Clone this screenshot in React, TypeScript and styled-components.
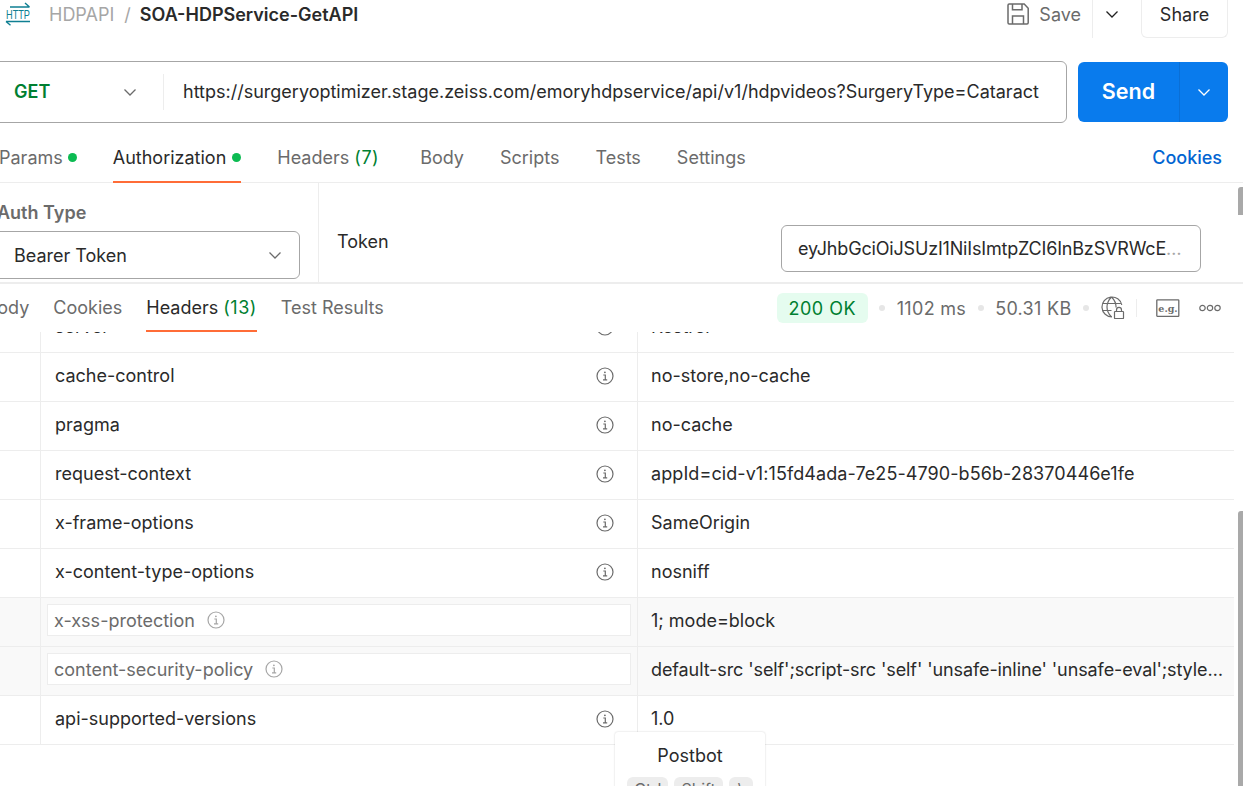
import styled, { createGlobalStyle } from 'styled-components';

const GlobalStyle = createGlobalStyle`
	html, body {
		margin: 0;
		padding: 0;
		background: #fff;
		overflow: hidden;
	}
	* {
		box-sizing: border-box;
	}
`;

const color = {
	text: '#2a2a2a',
	muted: '#6b6b6b',
	faint: '#a6a6a6',
	line: '#ededed',
	field: '#a6a6a6',
	green: '#007f31',
	dot: '#0cbb52',
	orange: '#ff6c37',
	blue: '#097bed',
	link: '#0265d2',
};

const Chevron = ({ size = 16, stroke = '#6b6b6b' }: { size?: number; stroke?: string }) => (
	<svg width={size} height={size} viewBox='0 0 16 16' fill='none'>
		<path d='M2.5 5.5 8 11l5.5-5.5' stroke={stroke} strokeWidth='1.3' />
	</svg>
);

const InfoIcon = ({ faded }: { faded?: boolean }) => (
	<svg width='18' height='18' viewBox='0 0 18 18' fill='none' stroke={faded ? '#a6a6a6' : '#6b6b6b'}>
		<circle cx='9' cy='9' r='8' strokeWidth='1.2' />
		<path d='M7.3 8h2v4.6M7 12.8h4.2' strokeWidth='1.2' />
		<circle cx='8.9' cy='5.3' r='.9' fill={faded ? '#a6a6a6' : '#6b6b6b'} stroke='none' />
	</svg>
);

const HttpIcon = () => (
	<svg width='26' height='28' viewBox='0 0 26 28' fill='none' stroke='#0f7f92'>
		<path d='M5 7h19.500M20 3l4.500 4' strokeWidth='1.4' />
		<path d='M1 21.500h24M1 21.500l4.500 3.800' strokeWidth='1.4' />
		<text x='13' y='19' textAnchor='middle' fontFamily='Liberation Sans, sans-serif' fontSize='13' fill='#0f7f92' stroke='none' textLength='24' lengthAdjust='spacingAndGlyphs'>
			HTTP
		</text>
	</svg>
);

const SaveIcon = () => (
	<SaveGlyph width='24' height='24' viewBox='0 0 24 24' fill='none' stroke='#6b6b6b' strokeWidth='1.5'>
		<path d='M2 3.200c0-.7.5-1.200 1.200-1.200h15l4 4.200v14.600c0 .7-.5 1.200-1.200 1.200H3.200c-.7 0-1.200-.5-1.200-1.200z' />
		<path d='M6.500 2v5.700h9.500V2M6.500 22v-8h11v8' />
	</SaveGlyph>
);

const GlobeLockIcon = () => (
	<GlobeGlyph width='26' height='24' viewBox='0 0 26 24' fill='none' stroke='#6b6b6b' strokeWidth='1.2'>
		<path d='M13 21a10 10 0 1 1 9.800-12M3.600 7.500h18M3 14.500h9.500M12.500 1c-6 6-6 14 0 20M12.500 1c3.300 3.200 4.600 7 4.600 10.500' />
		<rect x='15.500' y='15.500' width='9' height='7' rx='.6' fill='#fff' />
		<path d='M17.500 15.500v-1.600a2.500 2.500 0 0 1 5 0v1.600' />
	</GlobeGlyph>
);

const ExampleIcon = () => (
	<ExampleGlyph width='24' height='18' viewBox='0 0 24 18' fill='none'>
		<rect x='.8' y='.8' width='22' height='16.500' rx='.6' stroke='#6b6b6b' strokeWidth='1.3' />
		<text x='12' y='12.500' textAnchor='middle' fontFamily='DejaVu Serif, serif' fontSize='9.500' fontWeight='700' fill='#6b6b6b'>
			e.g.
		</text>
	</ExampleGlyph>
);

const MoreIcon = () => (
	<svg width='22' height='8' viewBox='0 0 22 8' fill='none' stroke='#6b6b6b' strokeWidth='1.2'>
		<circle cx='3.500' cy='4' r='2.700' />
		<circle cx='11' cy='4' r='2.700' />
		<circle cx='18.500' cy='4' r='2.700' />
	</svg>
);

type HeaderRow = { name: string; value: string; hidden?: boolean; spacing?: number };

const rows: HeaderRow[] = [
	{ name: 'server', value: 'Kestrel' },
	{ name: 'cache-control', value: 'no-store,no-cache' },
	{ name: 'pragma', value: 'no-cache' },
	{ name: 'request-context', value: 'appId=cid-v1:15fd4ada-7e25-4790-b56b-28370446e1fe', spacing: 0.08 },
	{ name: 'x-frame-options', value: 'SameOrigin' },
	{ name: 'x-content-type-options', value: 'nosniff' },
	{ name: 'x-xss-protection', value: '1; mode=block', hidden: true },
	{
		name: 'content-security-policy',
		value: "default-src 'self';script-src 'self' 'unsafe-inline' 'unsafe-eval';style-src 'self' 'unsafe-inline';img-src 'self' data:",
		hidden: true,
		spacing: -0.1,
	},
	{ name: 'api-supported-versions', value: '1.0' },
];

const App = () => {
	return (
		<Page>
			<GlobalStyle />
			<TopBar>
				<Crumbs>
					<HttpIcon />
					<Collection>HDPAPI</Collection>
					<Slash>/</Slash>
					<RequestName>SOA-HDPService-GetAPI</RequestName>
				</Crumbs>
				<TopActions>
					<SaveIcon />
					<SaveLabel>Save</SaveLabel>
					<SaveMenu>
						<Chevron stroke='#212121' />
					</SaveMenu>
					<ShareButton>Share</ShareButton>
				</TopActions>
			</TopBar>

			<RequestBar>
				<UrlBox>
					<Method>
						GET
						<Chevron />
					</Method>
					<UrlText>https://surgeryoptimizer.stage.zeiss.com/emoryhdpservice/api/v1/hdpvideos?SurgeryType=Cataract</UrlText>
				</UrlBox>
				<SendGroup>
					<SendLabel>Send</SendLabel>
					<SendMenu>
						<Chevron stroke='#fff' />
					</SendMenu>
				</SendGroup>
			</RequestBar>

			<RequestTabs>
				<Tab>
					Params
					<Dot />
				</Tab>
				<Tab $active>
					Authorization
					<Dot />
				</Tab>
				<Tab $wide>
					<span>
						Headers <Count>(7)</Count>
					</span>
				</Tab>
				<Tab>Body</Tab>
				<Tab>Scripts</Tab>
				<Tab>Tests</Tab>
				<Tab>Settings</Tab>
				<CookiesLink>Cookies</CookiesLink>
			</RequestTabs>

			<AuthPanel>
				<AuthType>
					<AuthLabel>Auth Type</AuthLabel>
					<AuthSelect>
						Bearer Token
						<Chevron />
					</AuthSelect>
				</AuthType>
				<TokenPane>
					<TokenLabel>Token</TokenLabel>
					<TokenField>
						<TokenValue>
							<span>eyJhbGciOiJSUzI1NiIsImtpZCI6InBzSVRWcEJ0</span>
						</TokenValue>
					</TokenField>
				</TokenPane>
			</AuthPanel>

			<ResponseBar>
				<ResponseTabs>
					<ResponseTab>Body</ResponseTab>
					<ResponseTab>Cookies</ResponseTab>
					<ResponseTab $active>
						<span>
							Headers <Count>(13)</Count>
						</span>
					</ResponseTab>
					<ResponseTab>Test Results</ResponseTab>
				</ResponseTabs>
				<Stats>
					<StatusBadge>200 OK</StatusBadge>
					<StatDot />
					<Stat>1102 ms</Stat>
					<StatDot />
					<Stat>50.31 KB</Stat>
					<StatDot />
					<GlobeLockIcon />
					<StatDivider />
					<ExampleIcon />
					<MoreIcon />
				</Stats>
			</ResponseBar>

			<Table>
				{rows.map((row) => (
					<Row
						key={row.name}
						$hidden={row.hidden}>
						<CheckCell />
						<NameCell>
							{row.hidden ? (
								<HiddenName>
									{row.name}
									<InfoIcon faded />
								</HiddenName>
							) : (
								<>
									{row.name}
									<InfoIcon />
								</>
							)}
						</NameCell>
						<ValueCell $spacing={row.spacing}>{row.value}</ValueCell>
					</Row>
				))}
			</Table>

			<ScrollThumb $top={187} $height={28} />
			<ScrollThumb $top={511} $height={275} />

			<PostbotCard>
				<PostbotTitle>Postbot</PostbotTitle>
				<Keys>
					<Key>Ctrl</Key>
					<Key>Shift</Key>
					<Key>\</Key>
				</Keys>
			</PostbotCard>
		</Page>
	);
};

export default App;

const Page = styled.div`
	position: relative;
	width: 1243px;
	height: 786px;
	overflow: hidden;
	background: #fff;
	color: ${color.text};
	font-family: Inter, 'Liberation Sans', sans-serif;
	font-size: 18px;
`;

const TopBar = styled.header`
	display: flex;
	justify-content: space-between;
	height: 61px;
	padding: 0 15px 0 5px;
`;

const Crumbs = styled.div`
	display: flex;
	align-items: center;
	height: 28px;
`;

const Collection = styled.span`
	margin-left: 18px;
	color: #a6a6a6;
`;

const Slash = styled.span`
	margin: 0 9px 0 10px;
	color: #a6a6a6;
`;

const RequestName = styled.span`
	font-weight: 600;
`;

const TopActions = styled.div`
	display: flex;
	align-items: flex-start;
	height: 38px;
`;

const SaveGlyph = styled.svg`
	margin-top: 2px;
`;

const SaveLabel = styled.span`
	margin: 4px 11px 0 9px;
	line-height: 22px;
	color: ${color.muted};
`;

const SaveMenu = styled.div`
	display: flex;
	align-items: center;
	justify-content: center;
	width: 38px;
	height: 38px;
	padding-bottom: 10px;
	border-left: 1px solid ${color.line};
`;

const ShareButton = styled.button`
	width: 87px;
	height: 38px;
	margin-left: 11px;
	padding: 0 0 9px;
	border: 1px solid ${color.line};
	border-top: none;
	border-radius: 0 0 6px 6px;
	background: #fff;
	color: ${color.text};
	font: inherit;
`;

const RequestBar = styled.div`
	display: flex;
	gap: 11px;
	height: 62px;
	padding-right: 15px;
	margin-left: -10px;
`;

const UrlBox = styled.div`
	display: flex;
	align-items: center;
	width: 1077px;
	border: 1px solid ${color.field};
	border-radius: 6px;
`;

const Method = styled.div`
	display: flex;
	align-items: center;
	justify-content: space-between;
	width: 173px;
	height: 36px;
	padding: 0 25px 2px 23px;
	border-right: 1px solid ${color.line};
	color: ${color.green};
	font-weight: 600;

	& svg {
		margin-top: 2px;
	}
`;

const UrlText = styled.div`
	margin: 0 0 1px 19px;
	white-space: nowrap;
`;

const SendGroup = styled.div`
	display: flex;
	width: 150px;
	height: 60px;
	margin-top: 1px;
	border-radius: 6px;
	background: ${color.blue};
	color: #fff;
`;

const SendLabel = styled.div`
	display: flex;
	align-items: center;
	justify-content: center;
	width: 101px;
	padding-bottom: 2px;
	font-size: 21.5px;
	font-weight: 600;
`;

const SendMenu = styled.div`
	display: flex;
	align-items: center;
	justify-content: center;
	flex: 1;
	border-left: 1px solid #0a6fd6;
`;

const RequestTabs = styled.nav`
	display: flex;
	gap: 36px;
	height: 60px;
	padding: 10px 21px 0 0;
	margin-left: -1px;
	border-bottom: 1px solid ${color.line};
`;

const Tab = styled.div<{ $active?: boolean; $wide?: boolean }>`
	display: flex;
	align-items: center;
	gap: 6px;
	height: 50px;
	margin-right: ${(p) => (p.$wide ? '5px' : '0')};
	border-bottom: 2px solid ${(p) => (p.$active ? color.orange : 'transparent')};
	color: ${(p) => (p.$active ? color.text : color.muted)};
	white-space: pre;

	&:first-child {
		gap: 5px;
	}
`;

const Dot = styled.span`
	width: 9px;
	height: 9px;
	border-radius: 50%;
	background: ${color.dot};
`;

const Count = styled.span`
	color: ${color.green};
	letter-spacing: 0.5px;
`;

const CookiesLink = styled.a`
	display: flex;
	align-items: center;
	height: 50px;
	margin-left: auto;
	padding-bottom: 2px;
	color: ${color.link};
	font-weight: 500;
`;

const AuthPanel = styled.section`
	display: flex;
	height: 101px;
	border-bottom: 2px solid ${color.line};
`;

const AuthType = styled.div`
	width: 319px;
	padding: 19px 18px 0 0;
	border-right: 1px solid ${color.line};
`;

const AuthLabel = styled.div`
	margin-left: -3px;
	line-height: 22px;
	color: ${color.muted};
	font-weight: 600;
`;

const AuthSelect = styled.div`
	display: flex;
	align-items: center;
	justify-content: space-between;
	height: 48px;
	margin: 7px 0 0 -10px;
	padding: 0 16px 0 23px;
	border: 1px solid ${color.field};
	border-radius: 6px;
`;

const TokenPane = styled.div`
	display: flex;
	flex: 1;
	justify-content: space-between;
	padding: 42px 42px 0 18px;
`;

const TokenLabel = styled.div`
	margin-top: 6px;
	line-height: 22px;
`;

const TokenField = styled.div`
	display: flex;
	align-items: center;
	width: 420px;
	height: 47px;
	padding: 0 16px;
	border: 1px solid ${color.field};
	border-radius: 6px;
`;

const TokenValue = styled.div`
	overflow: hidden;
	text-overflow: ellipsis;
	white-space: nowrap;
	color: ${color.faint};

	& span {
		color: ${color.text};
		letter-spacing: -0.18px;
	}
`;

const ResponseBar = styled.div`
	display: flex;
	justify-content: space-between;
	height: 48px;
	padding-right: 22px;
`;

const ResponseTabs = styled.nav`
	display: flex;
	gap: 24px;
	margin-left: -14.5px;
`;

const ResponseTab = styled.div<{ $active?: boolean }>`
	display: flex;
	align-items: center;
	height: 48px;
	border-bottom: 2px solid ${(p) => (p.$active ? color.orange : 'transparent')};
	color: ${(p) => (p.$active ? color.text : color.muted)};
	white-space: pre;
`;

const Stats = styled.div`
	display: flex;
	align-items: center;
	gap: 11.5px;
	height: 48px;
`;

const StatusBadge = styled.div`
	display: flex;
	align-items: center;
	justify-content: center;
	width: 91px;
	height: 30px;
	border-radius: 6px;
	background: #e5fcef;
	color: ${color.green};
	letter-spacing: 0.5px;
`;

const StatDot = styled.span`
	width: 6px;
	height: 6px;
	border-radius: 50%;
	background: #e6e6e6;
`;

const Stat = styled.span`
	color: ${color.muted};
	letter-spacing: 0.3px;
`;

const GlobeGlyph = styled.svg`
	margin-left: -2px;
`;

const StatDivider = styled.span`
	width: 1px;
	height: 18px;
	margin-right: 7.5px;
	background: ${color.line};
`;

const ExampleGlyph = styled.svg`
	margin-right: 7.5px;
`;

const Table = styled.div`
	width: 1234px;
	height: 454px;
	overflow: hidden;
`;

const Row = styled.div<{ $hidden?: boolean }>`
	display: grid;
	grid-template-columns: 41px 597px minmax(0, 1fr);
	height: 49px;
	border-bottom: 1px solid ${color.line};
	background: ${(p) => (p.$hidden ? '#f9f9f9' : '#fff')};
	color: ${(p) => (p.$hidden ? color.muted : color.text)};

	&:first-child {
		margin-top: -28px;
	}
`;

const CheckCell = styled.div`
	border-right: 1px solid ${color.line};
`;

const NameCell = styled.div`
	display: flex;
	align-items: center;
	justify-content: space-between;
	padding: 0 23px 3px 14px;
	border-right: 1px solid ${color.line};
`;

const HiddenName = styled.div`
	display: flex;
	align-items: center;
	gap: 12px;
	width: 584px;
	height: 32px;
	margin: 0 -17px 1px -8px;
	padding-left: 6px;
	border: 1px solid ${color.line};
	background: #fff;
`;

const ValueCell = styled.div<{ $spacing?: number }>`
	align-self: center;
	padding: 0 10px 3px 13px;
	overflow: hidden;
	text-overflow: ellipsis;
	white-space: nowrap;
	color: ${color.text};
	letter-spacing: ${(p) => p.$spacing ?? 0}px;
`;

const ScrollThumb = styled.div<{ $top: number; $height: number }>`
	position: absolute;
	top: ${(p) => p.$top}px;
	right: 0;
	width: 5px;
	height: ${(p) => p.$height}px;
	border-radius: 3px 0 0 0;
	background: #a9a9a9;
`;

const PostbotCard = styled.div`
	position: absolute;
	top: 732px;
	left: 615px;
	width: 150px;
	height: 70px;
	padding-top: 13px;
	border-radius: 3px;
	background: #fff;
	box-shadow: 0 0 2px rgba(0, 0, 0, 0.2);
	text-align: center;
`;

const PostbotTitle = styled.div`
	line-height: 22px;
`;

const Keys = styled.div`
	display: flex;
	justify-content: center;
	gap: 6px;
	margin-top: 10px;
`;

const Key = styled.span`
	min-width: 24px;
	padding: 0 7px;
	border-radius: 6px;
	background: #ededed;
	color: ${color.muted};
	font-size: 16px;
	line-height: 24px;
`;
